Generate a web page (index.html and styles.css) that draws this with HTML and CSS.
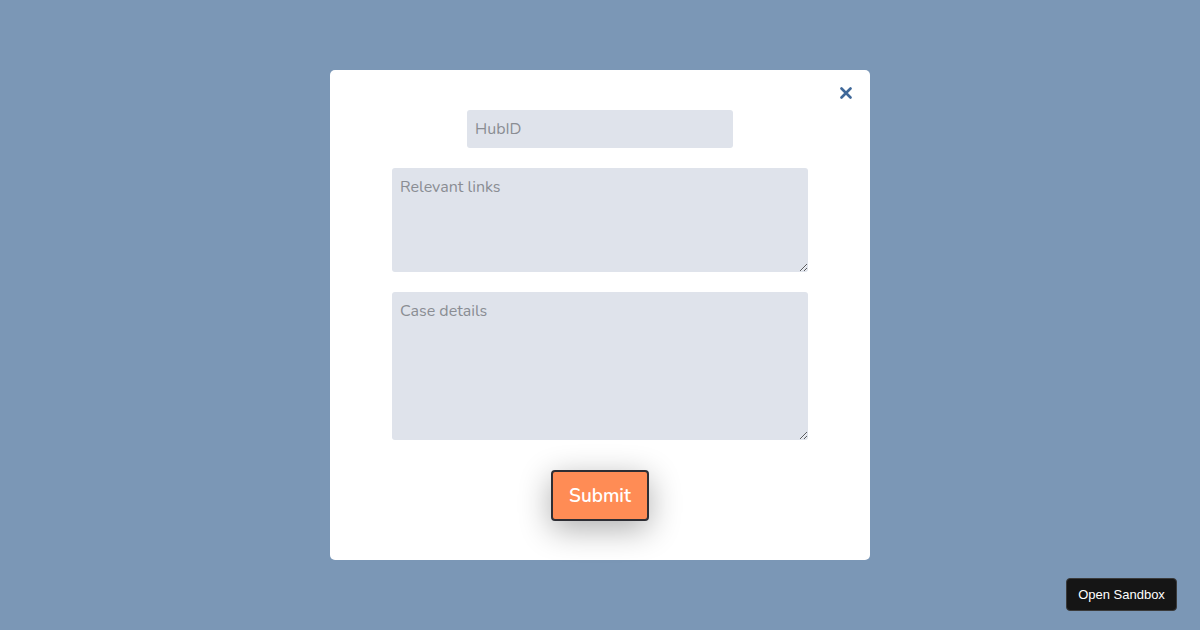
FILE: index.html
```html
<!DOCTYPE html>
<html>
<head>
<meta charset="utf-8">
<link rel="stylesheet" href="styles.css">
</head>
<body>
<div class="overlay">
  <div class="modal">
    <button class="close" aria-label="Close">
      <svg width="12" height="12" viewBox="0 0 12 12"><path d="M1.5 1.5L10.5 10.5M10.5 1.5L1.5 10.5" stroke="#3f6899" stroke-width="2.6" stroke-linecap="round"/></svg>
    </button>
    <form class="form">
      <input class="field hub" type="text" placeholder="HubID">
      <textarea class="field area links" placeholder="Relevant links"></textarea>
      <textarea class="field area details" placeholder="Case details"></textarea>
      <button class="submit" type="button">Submit</button>
    </form>
  </div>
</div>
<a class="sandbox">Open Sandbox</a>
</body>
</html>
```
FILE: styles.css
```css
* { box-sizing: border-box; }
html, body { margin: 0; height: 100%; }
body {
  background: #7b97b6;
  font-family: "Nunito", "Noto Sans", sans-serif;
}
.overlay {
  height: 630px;
  display: flex;
  align-items: center;
  justify-content: center;
}
.modal {
  position: relative;
  width: 540px;
  height: 490px;
  background: #fff;
  border-radius: 5px;
  padding-top: 40px;
}
.close {
  position: absolute;
  top: 17px;
  right: 18px;
  width: 12px;
  height: 12px;
  padding: 0;
  border: 0;
  background: none;
  display: flex;
}
.form {
  display: flex;
  flex-direction: column;
  align-items: center;
}
.field {
  background: #dfe3eb;
  border: 0;
  border-radius: 3px;
  font-family: "Nunito", "Noto Sans", sans-serif;
  font-size: 16px;
  color: #333;
  outline: none;
}
.field::placeholder { color: #8a8d93; }
.hub {
  width: 266px;
  height: 38px;
  padding: 0 8px;
}
.area {
  width: 416px;
  padding: 8px 8px;
  margin-top: 20px;
  resize: vertical;
}
.links { height: 104px; }
.details { height: 148px; }
.submit {
  margin-top: 30px;
  width: 98px;
  height: 51px;
  background: #ff8c55;
  border: 2px solid #2e2e34;
  border-radius: 4px;
  color: #fff;
  font-family: "Nunito", "Noto Sans", sans-serif;
  font-size: 19px;
  font-weight: 600;
  box-shadow: 0 8px 32px rgba(0,0,0,0.32);
  padding: 0;
}
.sandbox {
  position: fixed;
  right: 23px;
  bottom: 19px;
  width: 111px;
  height: 33px;
  background: #151515;
  border: 1px solid #3a3a3a;
  border-radius: 4px;
  color: #fff;
  font-family: "Liberation Sans", Arial, sans-serif;
  font-size: 13px;
  display: flex;
  align-items: center;
  justify-content: center;
}
```
